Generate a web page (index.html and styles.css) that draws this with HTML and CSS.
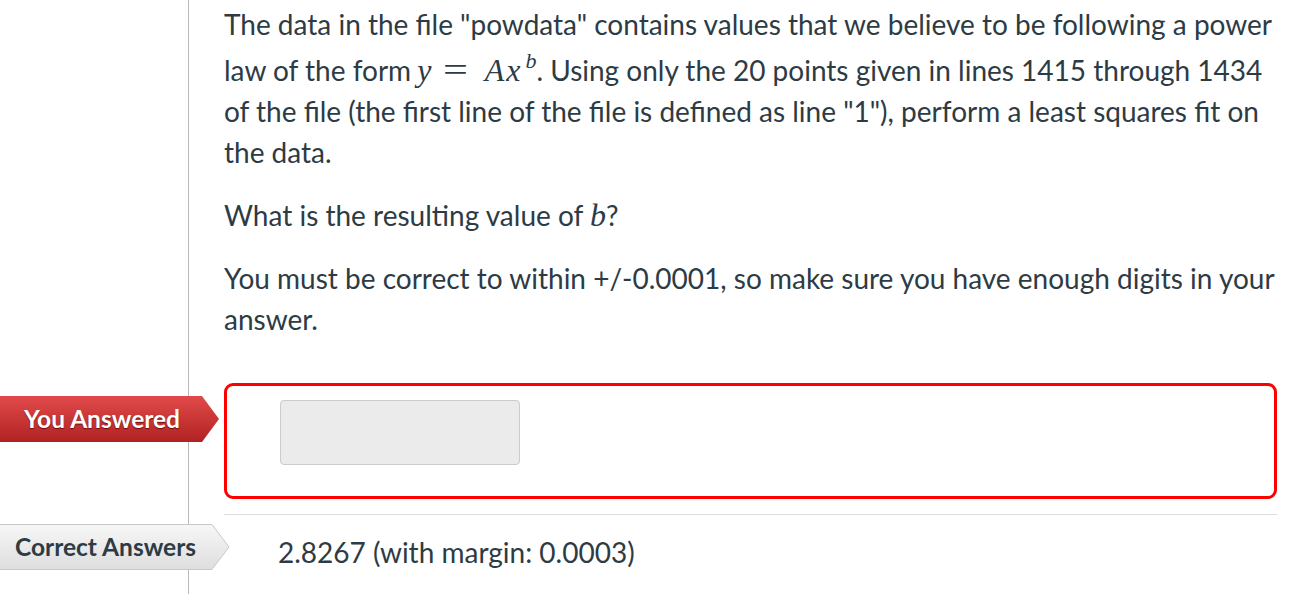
FILE: index.html
```html
<!DOCTYPE html>
<html lang="en">
<head>
<meta charset="utf-8">
<title>Quiz question</title>
<link rel="stylesheet" href="styles.css">
</head>
<body>
<div class="question">
  <div class="question-text">
    <p>The data in the file "powdata" contains values that we believe to be following a power law of the form <span class="math math-block"><i class="mi">y</i><span class="mo">=</span><i class="mi">A</i><i class="mi mx">x</i><sup class="msup"><i>b</i></sup></span>. Using only the 20 points given in lines 1415 through 1434 of the file (the first line of the file is defined as line "1"), perform a least squares fit on the data.</p>
    <p>What is the resulting value of <span class="math"><i class="mi">b</i></span>?</p>
    <p>You must be correct to within +/-0.0001, so make sure you have enough digits in your answer.</p>
  </div>
  <div class="answers">
    <div class="answer-row">
      <div class="badge badge-wrong">
        <svg class="badge-shape" width="219" height="46" viewBox="0 0 219 46" aria-hidden="true">
          <defs>
            <linearGradient id="gRed" x1="0" y1="0" x2="0" y2="1">
              <stop offset="0" stop-color="#e24a4a"/>
              <stop offset="1" stop-color="#b02222"/>
            </linearGradient>
          </defs>
          <polygon points="0,0 202,0 219,23 202,46 0,46" fill="url(#gRed)"/>
        </svg>
        <span class="badge-label">You Answered</span>
      </div>
      <div class="answer-box">
        <div class="answer-input"></div>
      </div>
    </div>
    <div class="answer-row correct-row">
      <div class="badge badge-correct">
        <svg class="badge-shape" width="230" height="46" viewBox="0 0 230 46" aria-hidden="true">
          <defs>
            <linearGradient id="gGray" x1="0" y1="0" x2="0" y2="1">
              <stop offset="0" stop-color="#f7f7f7"/>
              <stop offset="1" stop-color="#dedede"/>
            </linearGradient>
          </defs>
          <polygon points="-1,0.5 212,0.5 229,23 212,45.5 -1,45.5" fill="url(#gGray)" stroke="#c8c8c8" stroke-width="1"/>
        </svg>
        <span class="badge-label">Correct Answers</span>
      </div>
      <div class="correct-value">2.8267 (with margin: 0.0003)</div>
    </div>
  </div>
</div>
</body>
</html>
```
FILE: styles.css
```css
* { box-sizing: border-box; }
html, body { margin: 0; padding: 0; background: #fff; }
body {
  font-family: Lato, "Noto Sans", sans-serif;
  color: #2d3b45;
  font-size: 28px;
  line-height: 41px;
}
.question {
  margin-left: 188px;
  border-left: 1px solid #b9b9b9;
  min-height: 100vh;
  padding: 4px 25px 0 35px;
}
.question-text p { margin: 0 0 22px 0; }
.question-text p:last-child { margin-bottom: 0; }
.math {
  font-family: "Liberation Serif", "Times New Roman", serif;
  font-size: 32px;
  white-space: nowrap;
}
.math-block {
  display: inline-block;
  padding-top: 4px;
  line-height: 41px;
  margin-left: -1px;
}
.mi { font-style: italic; }
.mx { margin-left: 2px; }
.mo {
  display: inline-block;
  margin: 0 20px 0 14px;
  font-style: normal;
  font-size: 34px;
  transform: scaleX(1.3);
}
.msup {
  font-size: 22px;
  line-height: 0;
  vertical-align: 13px;
  margin-left: 5px;
  font-style: italic;
}
.answers { margin-top: 43px; }
.answer-row { position: relative; }
.badge {
  position: absolute;
  left: -224px;
  height: 46px;
  display: flex;
  align-items: center;
  font-weight: 700;
  font-size: 24.5px;
  line-height: 1;
}
.badge-shape { position: absolute; left: 0; top: 0; }
.badge-label { position: relative; }
.badge-wrong { top: 13px; width: 219px; color: #fff; padding-left: 24px; }
.badge-wrong .badge-label { text-shadow: 0 1px 1px rgba(90, 0, 0, 0.8); }
.badge-correct { top: 9px; width: 230px; color: #2d3b45; padding-left: 15px; }
.answer-box {
  border: 3px solid #ff0000;
  border-radius: 9px;
  padding: 14px 0 31px 53px;
}
.answer-input {
  width: 240px;
  height: 65px;
  border: 1px solid #cccccc;
  background: #ebebeb;
  border-radius: 4px;
}
.correct-row {
  margin-top: 15px;
  border-top: 1px solid #dddddd;
  padding: 17px 0 0 54px;
}
```
